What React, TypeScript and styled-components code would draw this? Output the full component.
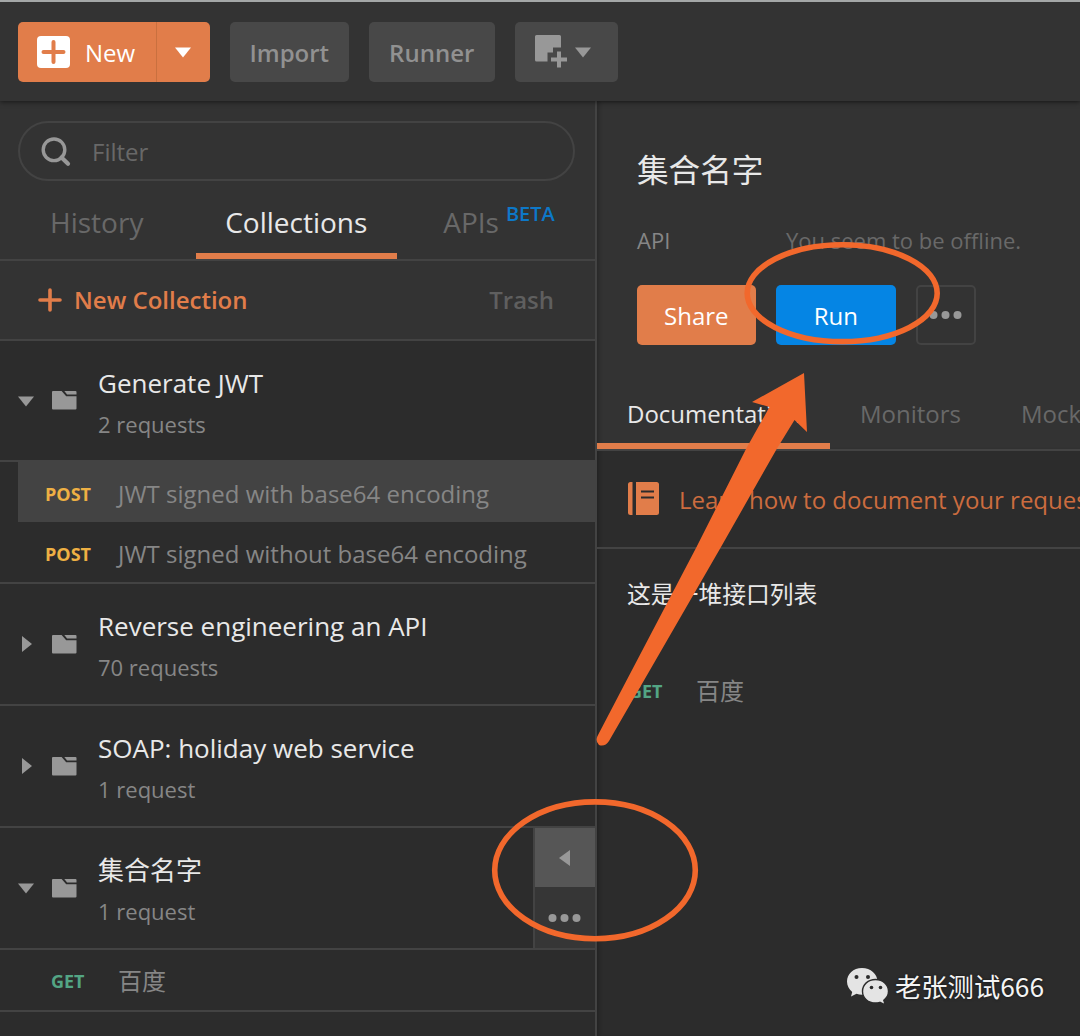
import React from "react";
import styled, { createGlobalStyle, css } from "styled-components";

const c = {
  panel: "#333333",
  body: "#2c2c2c",
  line: "#434343",
  orange: "#e17d4a",
  blue: "#0585e4",
  text: "#e8e8e8",
  muted: "#868686",
  dim: "#686868",
  icon: "#989898",
  mark: "#f2682c",
};

const Global = createGlobalStyle`
  * { box-sizing: border-box; }
  body { margin: 0; background: ${c.body}; overflow: hidden; }
  svg { flex: none; display: block; }
`;

const Window = styled.div`
  position: relative;
  width: 1080px;
  height: 1036px;
  display: flex;
  flex-direction: column;
  overflow: hidden;
  white-space: nowrap;
  background: ${c.body};
  border-top: 2px solid #a4a7a7;
  color: ${c.text};
  font-family: "Open Sans", "Noto Sans CJK SC", sans-serif;
  font-size: 24px;
  line-height: 32px;
`;

const Toolbar = styled.header`
  position: relative;
  z-index: 1;
  flex: none;
  height: 99px;
  display: flex;
  align-items: flex-start;
  gap: 20px;
  padding: 20px 18px;
  background: ${c.panel};
  box-shadow: 0 1px 5px rgba(0, 0, 0, 0.55);
`;

const SplitButton = styled.div`
  display: flex;
  width: 191.5px;
  height: 59.5px;
  border-radius: 5px;
  background: ${c.orange};
  color: #fff;
`;

const SplitMain = styled.div`
  width: 139px;
  display: flex;
  align-items: center;
  padding: 2px 0 0 19px;
  gap: 15px;
  border-right: 1px solid #c9703f;
  svg { margin-top: -2px; }
`;

const SplitCaret = styled.div`
  flex: 1;
  display: flex;
  align-items: center;
  justify-content: center;
  padding-top: 1px;
`;

const ToolButton = styled.div<{ $w: number }>`
  width: ${(p) => p.$w}px;
  height: 59.5px;
  display: flex;
  align-items: center;
  justify-content: center;
  padding-top: 2px;
  border-radius: 5px;
  background: #484848;
  color: #919191;
  font-weight: 600;
`;

const IconToolButton = styled(ToolButton)`
  justify-content: flex-start;
  gap: 7px;
  padding: 0 0 0 20px;
`;

const Columns = styled.div`
  flex: 1;
  min-height: 0;
  display: flex;
`;

const Sidebar = styled.aside`
  flex: none;
  width: 597px;
  border-right: 2px solid ${c.line};
`;

const SidebarTop = styled.div`
  height: 240px;
  background: ${c.panel};
  border-bottom: 2px solid ${c.line};
`;

const FilterArea = styled.div`
  height: 80px;
  padding: 20px 20px 0 18px;
`;

const FilterBox = styled.div`
  height: 60px;
  display: flex;
  align-items: center;
  gap: 21px;
  padding: 1px 0 0 21px;
  border: 2px solid ${c.line};
  border-radius: 30px;
  color: ${c.dim};
`;

const Tabs = styled.div`
  height: 80px;
  display: flex;
  border-bottom: 2px solid ${c.line};
`;

const Tab = styled.div<{ $w: number; $active?: boolean }>`
  flex: none;
  width: ${(p) => p.$w}px;
  height: 78px;
  display: flex;
  justify-content: center;
  padding-top: 25px;
  font-size: 28px;
  color: ${(p) => (p.$active ? c.text : c.dim)};
  ${(p) => p.$active && css`border-bottom: 6px solid ${c.orange};`}
  &:first-child { padding-right: 2px; }
`;

const Beta = styled.span`
  margin: -8px 0 0 7px;
  font-size: 20px;
  font-weight: 600;
  color: #0d78c8;
`;

const ActionsRow = styled.div`
  height: 78px;
  display: flex;
  align-items: center;
  padding: 0 41px 0 38px;
  font-weight: 600;
  color: ${c.orange};
  svg { margin-right: 12px; }
`;

const Trash = styled.span`
  margin-left: auto;
  color: #5f5f5f;
`;

const CollectionRow = styled.div<{ $h: number }>`
  height: ${(p) => p.$h}px;
  display: flex;
  border-bottom: 2px solid ${c.line};
`;

const CaretCell = styled.div`
  width: 52px;
  display: flex;
  justify-content: center;
  align-items: center;
`;

const FolderCell = styled.div`
  width: 46px;
  display: flex;
  align-items: center;
`;

const CollectionText = styled.div`
  flex: 1;
  padding-top: 26px;
`;

const CollectionName = styled.div`
  font-size: 26px;
  height: 41px;
`;

const CollectionCount = styled.div`
  font-size: 22px;
  color: ${c.muted};
`;

const Group = styled.div`
  padding-left: 18px;
  border-bottom: 2px solid ${c.line};
`;

const RequestRow = styled.div<{ $selected?: boolean; $top?: number }>`
  height: 60px;
  display: flex;
  align-items: center;
  padding-top: ${(p) => p.$top ?? 3}px;
  color: ${c.muted};
  background: ${(p) => (p.$selected ? "#434343" : "transparent")};
`;

const Method = styled.span<{ $get?: boolean }>`
  width: 100px;
  padding-left: ${(p) => (p.$get ? 33 : 27)}px;
  font-size: 18px;
  font-weight: 700;
  color: ${(p) => (p.$get ? "#53a584" : "#eeb044")};
`;

const RowActions = styled.div`
  width: 62px;
  border-left: 2px solid ${c.line};
`;

const RowAction = styled.div<{ $on?: boolean }>`
  height: ${(p) => (p.$on ? 59 : 61)}px;
  display: flex;
  align-items: center;
  justify-content: center;
  padding-right: 1px;
  background: ${(p) => (p.$on ? "#565656" : "#363636")};
`;

const Main = styled.main`
  flex: 1;
  min-width: 0;
  overflow: hidden;
  box-shadow: inset 4px 0 4px -2px rgba(0, 0, 0, 0.22);
`;

const Heading = styled.section`
  height: 350px;
  padding-top: 45px;
  background: ${c.panel};
  border-bottom: 2px solid ${c.line};
  box-shadow: inset 4px 0 4px -2px rgba(0, 0, 0, 0.22);
`;

const Title = styled.h1`
  margin: 0;
  padding-left: 40px;
  height: 78px;
  font-size: 31.6px;
  line-height: 48px;
  font-weight: 400;
`;

const Meta = styled.div`
  display: flex;
  height: 61px;
  padding-left: 40px;
  font-size: 22px;
  color: ${c.muted};
`;

const Kind = styled.span`
  width: 149px;
`;

const Offline = styled.span`
  color: #696969;
`;

const Buttons = styled.div`
  display: flex;
  gap: 20px;
  padding-left: 39.5px;
`;

const Button = styled.div<{ $bg: string }>`
  width: 119.5px;
  height: 60px;
  display: flex;
  align-items: center;
  justify-content: center;
  padding-top: 2px;
  border-radius: 5px;
  background: ${(p) => p.$bg};
  color: #fff;
`;

const MoreButton = styled.div`
  width: 60px;
  height: 60px;
  display: flex;
  align-items: center;
  justify-content: center;
  border: 2px solid ${c.line};
  border-radius: 5px;
`;

const MainTabs = styled.div`
  display: flex;
  margin-top: 40px;
  height: 64px;
`;

const MainTab = styled.div<{ $w?: number; $active?: boolean }>`
  flex: none;
  width: ${(p) => (p.$w ? p.$w + "px" : "auto")};
  padding: 13px 0 0 30px;
  color: ${(p) => (p.$active ? c.text : c.dim)};
  ${(p) => p.$active && css`border-bottom: 6px solid ${c.orange};`}
`;

const Learn = styled.div`
  height: 98px;
  display: flex;
  align-items: center;
  gap: 20px;
  padding: 1px 0 0 31px;
  border-bottom: 2px solid ${c.line};
  color: #cc6c3f;
  svg { margin-top: -2px; }
`;

const Description = styled.p`
  margin: 29px 0 0 30px;
  font-size: 23.8px;
`;

const DocRequest = styled.div`
  display: flex;
  align-items: center;
  margin: 65px 0 0 -1px;
  color: ${c.muted};
`;

const Annotations = styled.svg`
  position: absolute;
  z-index: 3;
  left: 0;
  top: -2px;
`;

const Watermark = styled.div`
  position: absolute;
  z-index: 4;
  left: 846px;
  top: 962px;
  display: flex;
  align-items: center;
  gap: 6px;
  font-family: "Noto Sans CJK SC", sans-serif;
  font-size: 26.3px;
  line-height: 44px;
  color: #f4f4f4;
  text-shadow: 0 0 3px rgba(0, 0, 0, 0.6);
`;

const Caret = ({ dir = "down", color = c.icon }: { dir?: "down" | "right" | "left"; color?: string }) => (
  <svg width="16" height="16" viewBox="0 0 16 16" fill={color}>
    {dir === "down" && <path d="M0 3.500h16L8 13.500z" />}
    {dir === "right" && <path d="M4 0v16l10-8z" />}
    {dir === "left" && <path d="M13 0v16L2 8z" />}
  </svg>
);

const NewIcon = () => (
  <svg width="33" height="32" viewBox="0 0 33 32">
    <rect width="33" height="32" rx="4" fill="#fff" />
    <path d="M16.500 6v20M6.500 16h20" stroke={c.orange} strokeWidth="4" strokeLinecap="round" />
  </svg>
);

const WindowIcon = () => (
  <svg width="33" height="33" viewBox="0 0 33 33" fill={c.icon}>
    <path d="M1.500 0h23a1.500 1.500 0 0 1 1.500 1.500V12.500h-8v5H12.500v9H1.500A1.500 1.500 0 0 1 0 25V1.500A1.500 1.500 0 0 1 1.500 0z" />
    <path d="M22 16.500h4v6h6v4h-6v6H22v-6h-6v-4h6z" />
  </svg>
);

const SearchIcon = () => (
  <svg width="30" height="30" viewBox="0 0 30 30" fill="none" stroke={c.icon}>
    <circle cx="13" cy="12.800" r="10.800" strokeWidth="3.400" />
    <path d="M20.500 20.500l6.500 6.200" strokeWidth="4.200" strokeLinecap="round" />
  </svg>
);

const PlusIcon = () => (
  <svg width="24" height="24" viewBox="0 0 24 24" stroke={c.orange} strokeWidth="3.600" strokeLinecap="round">
    <path d="M12 2v20M2 12h20" />
  </svg>
);

const FolderIcon = () => (
  <svg width="25" height="19" viewBox="0 0 25 19" fill={c.icon}>
    <path d="M1 0h8.600l4.600 5.300H24.500V17.500a1 1 0 0 1-1 1H1a1 1 0 0 1-1-1V1a1 1 0 0 1 1-1z" />
    <path d="M12.300 0H23.500a1 1 0 0 1 1 1v2.600h-9.400z" />
  </svg>
);

const Dots = () => (
  <svg width="33" height="10" viewBox="0 0 33 10" fill={c.icon}>
    <circle cx="4.500" cy="5" r="4" />
    <circle cx="16.500" cy="5" r="4" />
    <circle cx="28.500" cy="5" r="4" />
  </svg>
);

const BookIcon = () => (
  <svg width="31" height="33" viewBox="0 0 31 33">
    <path d="M2.500 0H4.500v33H2.500A2.500 2.500 0 0 1 0 30.500v-28A2.500 2.500 0 0 1 2.500 0zM8 0h20.500A2.500 2.500 0 0 1 31 2.500v28a2.500 2.500 0 0 1-2.500 2.500H8z" fill={c.orange} />
    <path d="M13 9.500h13M13 15.500h13" stroke={c.body} strokeWidth="2.200" />
  </svg>
);

const ChatIcon = () => (
  <svg width="43" height="38" viewBox="0 0 43 38">
    <path d="M16 1C7.200 1 1 7 1 14.600c0 4.300 2 7.900 5.200 10.300L5 29.500l5.500-2.700c1.700.6 3.600.9 5.500.9 8.600 0 15.500-5.700 15.500-13.200S24.600 1 16 1z" fill="#e4e4e4" />
    <path d="M29.500 12.500c-7.400 0-13 5.100-13 11.800S22.100 36 29.500 36c1.500 0 3-.2 4.400-.7l5.300 2.500-1.400-4.600c3-2.200 4.700-5.300 4.700-8.900 0-6.700-5.600-11.800-13-11.800z" fill="#e4e4e4" stroke={c.body} strokeWidth="1.400" />
    <g fill={c.body}>
      <circle cx="10.500" cy="10" r="2" />
      <circle cx="22" cy="10" r="2" />
      <circle cx="25.500" cy="20.500" r="1.800" />
      <circle cx="34.500" cy="20.500" r="1.800" />
    </g>
  </svg>
);

type CollectionProps = { name: string; count: string; open?: boolean; height: number; actions?: boolean };

const Collection = ({ name, count, open, height, actions }: CollectionProps) => (
  <CollectionRow $h={height}>
    <CaretCell><Caret dir={open ? "down" : "right"} /></CaretCell>
    <FolderCell><FolderIcon /></FolderCell>
    <CollectionText>
      <CollectionName>{name}</CollectionName>
      <CollectionCount>{count}</CollectionCount>
    </CollectionText>
    {actions && (
      <RowActions>
        <RowAction $on><Caret dir="left" /></RowAction>
        <RowAction><Dots /></RowAction>
      </RowActions>
    )}
  </CollectionRow>
);

export default function App() {
  return (
    <>
      <Global />
      <Window>
        <Toolbar>
          <SplitButton>
            <SplitMain><NewIcon />New</SplitMain>
            <SplitCaret><Caret color="#fff" /></SplitCaret>
          </SplitButton>
          <ToolButton $w={119.5}>Import</ToolButton>
          <ToolButton $w={125.5}>Runner</ToolButton>
          <IconToolButton $w={103.5}>
            <WindowIcon />
            <Caret />
          </IconToolButton>
        </Toolbar>
        <Columns>
          <Sidebar>
            <SidebarTop>
              <FilterArea>
                <FilterBox><SearchIcon />Filter</FilterBox>
              </FilterArea>
              <Tabs>
                <Tab $w={195.5}>History</Tab>
                <Tab $w={201.5} $active>Collections</Tab>
                <Tab $w={204}>APIs<Beta>BETA</Beta></Tab>
              </Tabs>
              <ActionsRow>
                <PlusIcon />New Collection
                <Trash>Trash</Trash>
              </ActionsRow>
            </SidebarTop>
            <Collection name="Generate JWT" count="2 requests" open height={121} />
            <Group>
              <RequestRow $selected><Method>POST</Method>JWT signed with base64 encoding</RequestRow>
              <RequestRow><Method>POST</Method>JWT signed without base64 encoding</RequestRow>
            </Group>
            <Collection name="Reverse engineering an API" count="70 requests" height={122} />
            <Collection name="SOAP: holiday web service" count="1 request" height={122} />
            <Collection name="集合名字" count="1 request" open height={122} actions />
            <Group>
              <RequestRow $top={1}><Method $get>GET</Method>百度</RequestRow>
            </Group>
          </Sidebar>
          <Main>
            <Heading>
              <Title>集合名字</Title>
              <Meta>
                <Kind>API</Kind>
                <Offline>You seem to be offline.</Offline>
              </Meta>
              <Buttons>
                <Button $bg={c.orange}>Share</Button>
                <Button $bg={c.blue}>Run</Button>
                <MoreButton><Dots /></MoreButton>
              </Buttons>
              <MainTabs>
                <MainTab $w={233} $active>Documentation</MainTab>
                <MainTab $w={161}>Monitors</MainTab>
                <MainTab>Mock</MainTab>
              </MainTabs>
            </Heading>
            <Learn><BookIcon />Learn how to document your requests</Learn>
            <Description>这是一堆接口列表</Description>
            <DocRequest><Method $get>GET</Method>百度</DocRequest>
          </Main>
        </Columns>
        <Annotations width="1080" height="1036" viewBox="0 0 1080 1036">
          <g fill="none" stroke={c.mark} strokeWidth="5.600">
            <ellipse cx="842.200" cy="293.200" rx="95" ry="48.400" />
            <ellipse cx="595" cy="870.300" rx="100.300" ry="68.400" />
          </g>
          <path d="M804 373L807 432 794.500 420 776.700 449 721 547 609 741Q605 747 599 745 595 741 597.500 736L621 691 696 548 746 449 769.500 407 752 402z" fill={c.mark} />
        </Annotations>
        <Watermark><ChatIcon />老张测试666</Watermark>
      </Window>
    </>
  );
}
